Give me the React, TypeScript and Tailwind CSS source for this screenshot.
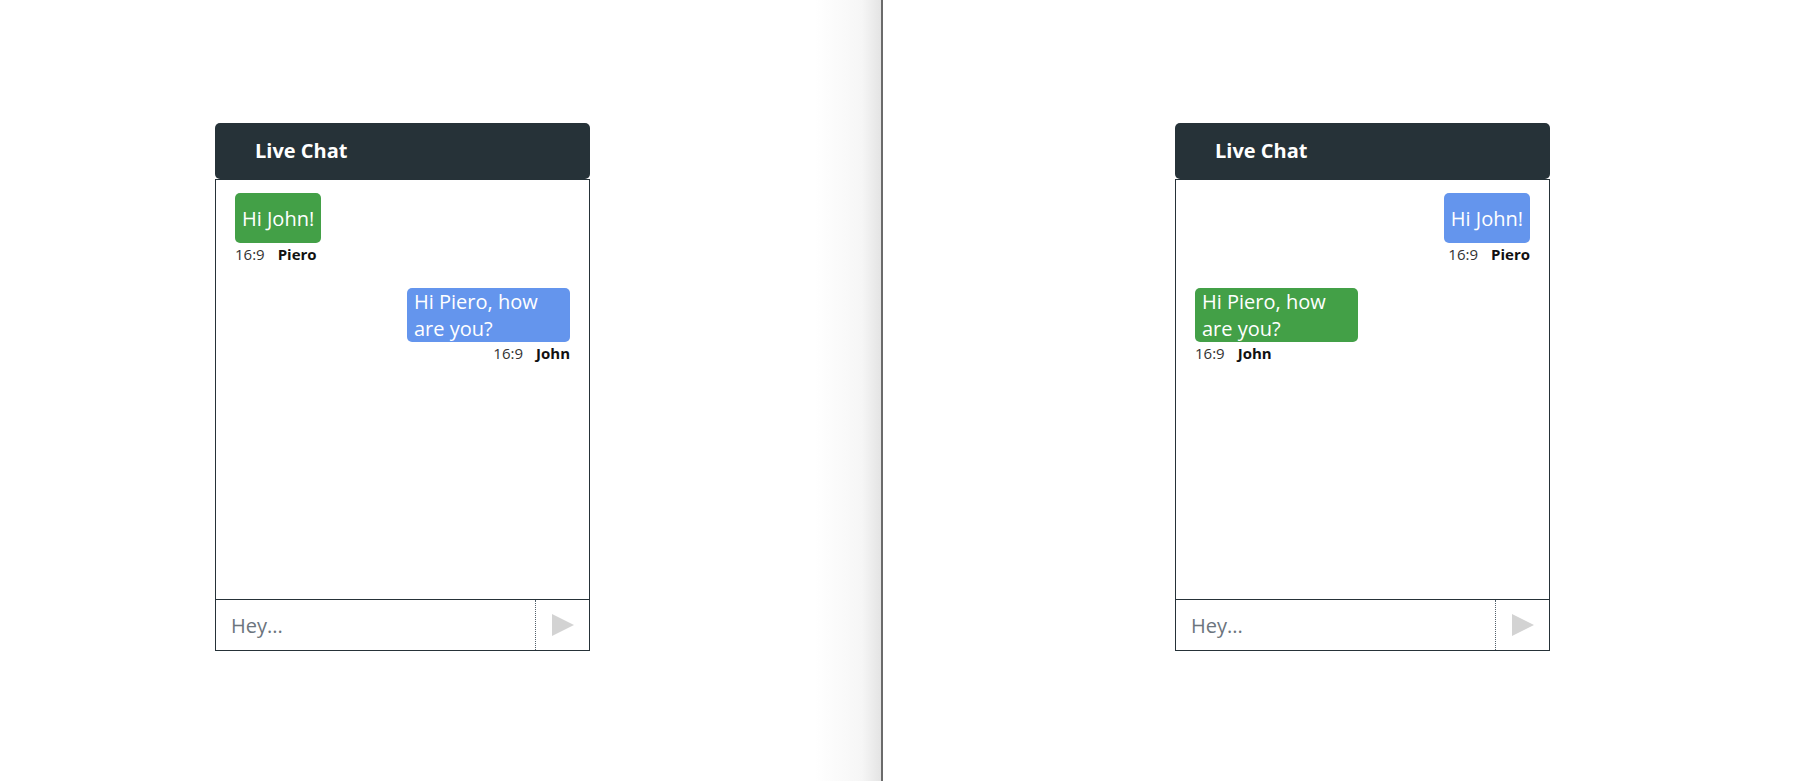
import React from "react";

type Msg = { text: string; time: string; author: string; mine: boolean };

const messages = (viewer: "Piero" | "John"): Msg[] => [
  { text: "Hi John!", time: "16:9", author: "Piero", mine: viewer === "Piero" },
  { text: "Hi Piero, how are you?", time: "16:9", author: "John", mine: viewer === "John" },
];

function Bubble({ msg }: { msg: Msg }) {
  return (
    <div className={msg.mine ? "flex flex-col items-start" : "flex flex-col items-end"}>
      <div
        className={
          "min-h-[50px] max-w-[163px] flex items-center rounded-[5px] px-[7px] text-[20px] leading-[27px] text-white " +
          (msg.mine ? "bg-[#43a047]" : "bg-[#6495ed]")
        }
      >
        {msg.text}
      </div>
      <div className="mt-[1px] flex gap-[13px] text-[15px] leading-[20px]">
        <span className="text-[#333]">{msg.time}</span>
        <span className="font-bold text-[#111]">{msg.author}</span>
      </div>
    </div>
  );
}

function ChatPanel({ viewer }: { viewer: "Piero" | "John" }) {
  return (
    <div className="w-[375px]">
      {/* header */}
      <div className="h-[56px] rounded-[5px] bg-[#263238] pl-[40px] flex items-center text-[20px] font-bold text-white">
        Live Chat
      </div>

      {/* messages */}
      <div className="h-[420px] border-x border-t border-[#263238] px-[19px] pt-[13px] flex flex-col gap-[24px]">
        {messages(viewer).map((m, i) => (
          <Bubble key={i} msg={m} />
        ))}
      </div>

      {/* input */}
      <div className="h-[52px] border border-[#263238] flex">
        <input
          className="flex-1 min-w-0 pl-[15px] pt-[2px] text-[20px] outline-none placeholder:text-[#6c757d] bg-transparent"
          placeholder="Hey..."
        />
        <button className="w-[54px] border-l border-dotted border-[#52606b] flex items-center justify-center">
          <svg width="22" height="22" viewBox="0 0 22 22">
            <path d="M0 0 L22 11 L0 22 Z" fill="#d3d3d3" />
          </svg>
        </button>
      </div>
    </div>
  );
}

export default function App() {
  return (
    <div className="h-[781px] w-full flex overflow-hidden bg-white font-['Open_Sans',sans-serif]">
      <div className="w-[881px] shrink-0 pl-[215px] pt-[123px] bg-[linear-gradient(to_right,#ffffff_815px,#f6f6f6_862px,#e4e4e4_881px)]">
        <ChatPanel viewer="Piero" />
      </div>
      <div className="w-[2px] shrink-0 bg-[#6b6b6b]" />
      <div className="flex-1 pl-[292px] pt-[123px]">
        <ChatPanel viewer="John" />
      </div>
    </div>
  );
}
